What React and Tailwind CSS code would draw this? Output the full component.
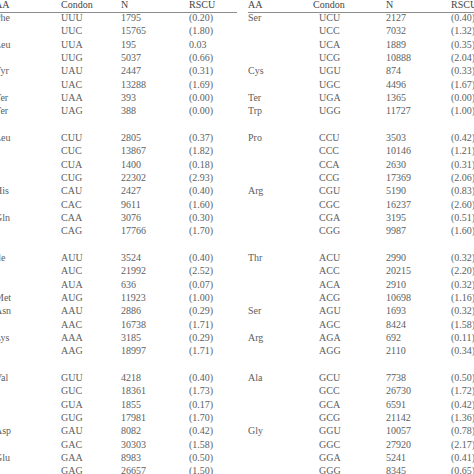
const left = [
  [
    ["Phe", "UUU", "1795", "(0.20)"],
    ["", "UUC", "15765", "(1.80)"],
    ["Leu", "UUA", "195", "0.03"],
    ["", "UUG", "5037", "(0.66)"],
    ["Tyr", "UAU", "2447", "(0.31)"],
    ["", "UAC", "13288", "(1.69)"],
    ["Ter", "UAA", "393", "(0.00)"],
    ["Ter", "UAG", "388", "(0.00)"],
  ],
  [
    ["Leu", "CUU", "2805", "(0.37)"],
    ["", "CUC", "13867", "(1.82)"],
    ["", "CUA", "1400", "(0.18)"],
    ["", "CUG", "22302", "(2.93)"],
    ["His", "CAU", "2427", "(0.40)"],
    ["", "CAC", "9611", "(1.60)"],
    ["Gln", "CAA", "3076", "(0.30)"],
    ["", "CAG", "17766", "(1.70)"],
  ],
  [
    ["Ile", "AUU", "3524", "(0.40)"],
    ["", "AUC", "21992", "(2.52)"],
    ["", "AUA", "636", "(0.07)"],
    ["Met", "AUG", "11923", "(1.00)"],
    ["Asn", "AAU", "2886", "(0.29)"],
    ["", "AAC", "16738", "(1.71)"],
    ["Lys", "AAA", "3185", "(0.29)"],
    ["", "AAG", "18997", "(1.71)"],
  ],
  [
    ["Val", "GUU", "4218", "(0.40)"],
    ["", "GUC", "18361", "(1.73)"],
    ["", "GUA", "1855", "(0.17)"],
    ["", "GUG", "17981", "(1.70)"],
    ["Asp", "GAU", "8082", "(0.42)"],
    ["", "GAC", "30303", "(1.58)"],
    ["Glu", "GAA", "8983", "(0.50)"],
    ["", "GAG", "26657", "(1.50)"],
  ],
];

const right = [
  [
    ["Ser", "UCU", "2127", "(0.40)"],
    ["", "UCC", "7032", "(1.32)"],
    ["", "UCA", "1889", "(0.35)"],
    ["", "UCG", "10888", "(2.04)"],
    ["Cys", "UGU", "874", "(0.33)"],
    ["", "UGC", "4496", "(1.67)"],
    ["Ter", "UGA", "1365", "(0.00)"],
    ["Trp", "UGG", "11727", "(1.00)"],
  ],
  [
    ["Pro", "CCU", "3503", "(0.42)"],
    ["", "CCC", "10146", "(1.21)"],
    ["", "CCA", "2630", "(0.31)"],
    ["", "CCG", "17369", "(2.06)"],
    ["Arg", "CGU", "5190", "(0.83)"],
    ["", "CGC", "16237", "(2.60)"],
    ["", "CGA", "3195", "(0.51)"],
    ["", "CGG", "9987", "(1.60)"],
  ],
  [
    ["Thr", "ACU", "2990", "(0.32)"],
    ["", "ACC", "20215", "(2.20)"],
    ["", "ACA", "2910", "(0.32)"],
    ["", "ACG", "10698", "(1.16)"],
    ["Ser", "AGU", "1693", "(0.32)"],
    ["", "AGC", "8424", "(1.58)"],
    ["Arg", "AGA", "692", "(0.11)"],
    ["", "AGG", "2110", "(0.34)"],
  ],
  [
    ["Ala", "GCU", "7738", "(0.50)"],
    ["", "GCC", "26730", "(1.72)"],
    ["", "GCA", "6591", "(0.42)"],
    ["", "GCG", "21142", "(1.36)"],
    ["Gly", "GGU", "10057", "(0.78)"],
    ["", "GGC", "27920", "(2.17)"],
    ["", "GGA", "5241", "(0.41)"],
    ["", "GGG", "8345", "(0.65)"],
  ],
];

const CodonTable = ({ blocks, cols, headCodon, className }) => {
  return (
    <div className={className}>
      <div
        className={`grid ${cols} h-[13px] border-b border-[#8c8c8c] text-[#444] leading-[10px]`}
      >
        <span>AA</span>
        <span className={headCodon}>Condon</span>
        <span>N</span>
        <span>RSCU</span>
      </div>
      <div className="-mt-[2px] flex flex-col">
        {blocks.map((block, bi) => (
          <div key={bi} className={bi > 0 ? "pt-[13.34px]" : ""}>
            {block.map((r, ri) => (
              <div
                key={ri}
                className={`grid ${cols} h-[13.34px] leading-[13.34px] text-[#5e5e5e]`}
              >
                <span>{r[0]}</span>
                <span>{r[1]}</span>
                <span>{r[2]}</span>
                <span>{r[3]}</span>
              </div>
            ))}
          </div>
        ))}
      </div>
    </div>
  );
};

export default function App() {
  return (
    <div
      className="w-[474px] h-[474px] overflow-hidden bg-white text-[10px] whitespace-nowrap"
      style={{ fontFamily: '"Liberation Serif", "DejaVu Serif", serif' }}
    >
      <div className="flex">
        <CodonTable
          blocks={left}
          cols="grid-cols-[66px_60px_68px_1fr]"
          headCodon=""
          className="w-[242px] shrink-0 -ml-[5px]"
        />
        <CodonTable
          blocks={right}
          cols="grid-cols-[71px_67px_65px_1fr]"
          headCodon="-ml-[6px]"
          className="w-[260px] shrink-0 pl-[11px]"
        />
      </div>
    </div>
  );
}
